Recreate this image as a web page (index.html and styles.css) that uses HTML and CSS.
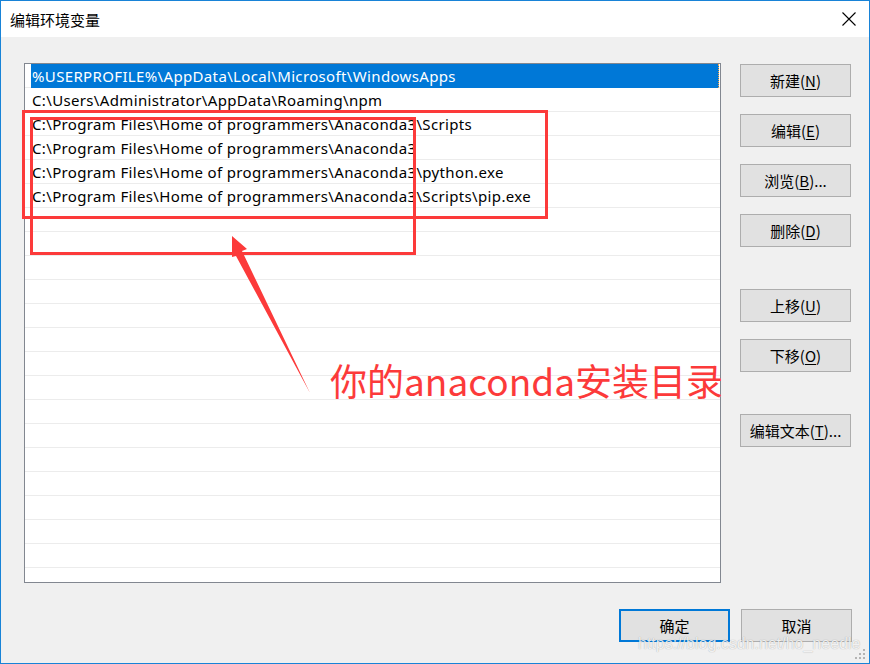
FILE: index.html
```html
<!DOCTYPE html>
<html lang="zh-CN">
<head>
<meta charset="utf-8">
<title>编辑环境变量</title>
<link rel="stylesheet" href="styles.css">
</head>
<body>
<div class="window">
  <div class="titlebar">
    <span class="title">编辑环境变量</span>
    <svg class="close" width="16" height="16" viewBox="0 0 16 16"><path d="M1.5 1.5 L14.5 14.5 M14.5 1.5 L1.5 14.5" stroke="#000" stroke-width="1.1" fill="none"/></svg>
  </div>
  <div class="body">
    <div class="list">
      <div class="row"><div class="cell selected">%USERPROFILE%\AppData\Local\Microsoft\WindowsApps</div></div>
      <div class="row"><div class="cell">C:\Users\Administrator\AppData\Roaming\npm</div></div>
      <div class="row"><div class="cell">C:\Program Files\Home of programmers\Anaconda3\Scripts</div></div>
      <div class="row"><div class="cell">C:\Program Files\Home of programmers\Anaconda3</div></div>
      <div class="row"><div class="cell">C:\Program Files\Home of programmers\Anaconda3\python.exe</div></div>
      <div class="row"><div class="cell">C:\Program Files\Home of programmers\Anaconda3\Scripts\pip.exe</div></div>
      <div class="row"></div><div class="row"></div><div class="row"></div><div class="row"></div>
      <div class="row"></div><div class="row"></div><div class="row"></div><div class="row"></div>
      <div class="row"></div><div class="row"></div><div class="row"></div><div class="row"></div>
      <div class="row"></div><div class="row"></div><div class="row"></div><div class="row"></div>
    </div>
    <div class="side">
      <button class="btn">新建(<u>N</u>)</button>
      <button class="btn">编辑(<u>E</u>)</button>
      <button class="btn">浏览(<u>B</u>)...</button>
      <button class="btn">删除(<u>D</u>)</button>
      <button class="btn spaced">上移(<u>U</u>)</button>
      <button class="btn">下移(<u>O</u>)</button>
      <button class="btn spaced">编辑文本(<u>T</u>)...</button>
    </div>
  </div>
  <div class="footer">
    <button class="btn default">确定</button>
    <button class="btn">取消</button>
  </div>

  <svg class="annot" width="870" height="664" viewBox="0 0 870 664">
    <rect x="23.5" y="111.5" width="523" height="106" fill="none" stroke="#fc3a3a" stroke-width="3"/>
    <rect x="31.5" y="118.5" width="383" height="135" fill="none" stroke="#fc3a3a" stroke-width="3"/>
    <polygon points="232,236 247,249 242,251 310,393 236,256 232,257" fill="#fc3a3a"/>
  </svg>
  <div class="note">你的anaconda安装目录</div>
  <div class="watermark">https://blog.csdn.net/ho_needle</div>
  <svg class="grip" width="12" height="12" viewBox="0 0 12 12">
    <rect x="8" y="0" width="2" height="2" fill="#b4b4b4"/>
    <rect x="4" y="4" width="2" height="2" fill="#b4b4b4"/>
    <rect x="8" y="4" width="2" height="2" fill="#b4b4b4"/>
    <rect x="0" y="8" width="2" height="2" fill="#b4b4b4"/>
    <rect x="4" y="8" width="2" height="2" fill="#b4b4b4"/>
    <rect x="8" y="8" width="2" height="2" fill="#b4b4b4"/>
  </svg>
</div>
</body>
</html>
```

FILE: styles.css
```css
html, body {
  margin: 0;
  padding: 0;
  background: #f0f0f0;
}
.window {
  position: relative;
  width: 870px;
  height: 664px;
  box-sizing: border-box;
  border: 1px solid #1883d7;
  background: #f0f0f0;
  font-family: "Noto Sans", "Noto Sans CJK SC", sans-serif;
  font-size: 15px;
  color: #000;
  overflow: hidden;
}
.titlebar {
  height: 36px;
  background: #fff;
  display: flex;
  align-items: center;
  justify-content: space-between;
  padding: 0 12px 0 9px;
}
.title {
  font-family: "Noto Sans CJK SC", sans-serif;
  font-size: 15px;
}
.close {
  display: block;
}
.body {
  display: flex;
  gap: 19px;
  padding: 26px 17px 0 23px;
}
.list {
  width: 697px;
  height: 520px;
  box-sizing: border-box;
  border: 1px solid #828790;
  background: #fff;
  overflow: hidden;
}
.row {
  height: 23px;
  border-bottom: 1px solid #ececec;
  padding: 0 1px 0 6px;
}
.cell {
  height: 24px;
  line-height: 25px;
  padding-left: 1px;
  letter-spacing: 0.35px;
  white-space: nowrap;
}
.cell.selected {
  background: #0078d7;
  color: #fff;
  box-sizing: border-box;
  border-right: 1px dotted #f6a64a;
}
.side {
  width: 111px;
  display: flex;
  flex-direction: column;
  gap: 17px;
  padding-top: 1px;
}
.btn {
  width: 111px;
  height: 33px;
  box-sizing: border-box;
  background: #e1e1e1;
  border: 1px solid #adadad;
  font-family: "Noto Sans CJK SC", sans-serif;
  font-size: 15px;
  color: #000;
  padding: 0;
  margin: 0;
}
.btn u {
  text-underline-offset: 2px;
}
.side .spaced {
  margin-top: 25px;
}
.footer {
  display: flex;
  justify-content: flex-end;
  gap: 11px;
  margin-top: 26px;
  padding-right: 17px;
}
.btn.default {
  border: 2px solid #0078d7;
}
.annot {
  position: absolute;
  left: -1px;
  top: -1px;
  pointer-events: none;
}
.note {
  position: absolute;
  left: 329px;
  top: 359px;
  font-family: "Noto Sans CJK SC", sans-serif;
  font-size: 37px;
  line-height: 40px;
  color: #fc3a3a;
  white-space: nowrap;
}
.watermark {
  position: absolute;
  left: 637px;
  top: 634px;
  font-family: "Liberation Sans", sans-serif;
  font-size: 16px;
  color: rgba(255, 255, 255, 0.85);
  text-shadow: 0 0 1px rgba(0, 0, 0, 0.35);
  white-space: nowrap;
}
.grip {
  position: absolute;
  right: 2px;
  bottom: 2px;
}
```
